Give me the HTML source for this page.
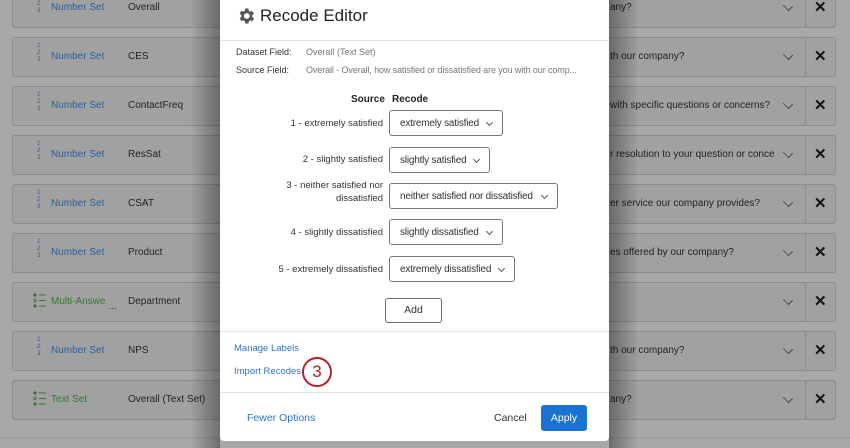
<!DOCTYPE html>
<html><head><style>
body{margin:0;width:850px;height:448px;overflow:hidden;background:#a8a8a8;font-family:"Liberation Sans",sans-serif;position:relative}
.card{position:absolute;left:12px;width:824px;height:40px;background:#a1a1a1;border:1px solid #8c8c8c;border-radius:3px;box-sizing:border-box;overflow:hidden}
.card .t{position:absolute;left:38px;top:13px;font-size:10px;color:#2b5f98}
.card .t.g{color:#2f7a2f}
.card .n{position:absolute;left:115px;top:13px;font-size:10px;color:#222}
.card .q{position:absolute;left:597px;top:13px;font-size:10px;color:#222;white-space:nowrap;width:165px;overflow:hidden}
.card .div{position:absolute;left:792px;top:0;bottom:0;border-left:1px solid #8a8a8a}
.card .ch{position:absolute;left:771px;top:13px;width:7px;height:7px;border-right:1px solid #444;border-bottom:1px solid #444;transform:rotate(45deg) scale(1,0.8)}
.card .x{position:absolute;left:801px;top:11px;font-size:15px;font-weight:bold;color:#111;line-height:15px}
.ic{position:absolute;left:24px;top:5px;font-size:6px;color:#2b5f98;line-height:7px;font-style:italic}
.mi{position:absolute;left:20px;top:10px}
.shade{position:absolute;left:190px;width:30px;top:0;height:448px;background:linear-gradient(to right,rgba(0,0,0,0),rgba(0,0,0,0.35))}
.shade2{position:absolute;left:609px;width:30px;top:0;height:448px;background:linear-gradient(to left,rgba(0,0,0,0),rgba(0,0,0,0.35))}
.m{position:absolute;left:220px;top:-10px;width:389px;height:451px;background:#fff;border-radius:4px}
.a{position:absolute;white-space:nowrap}
.lbl{font-size:9.5px;color:#333;text-align:right}
.dd{position:absolute;left:389px;height:26px;border:1px solid #777;border-radius:3px;box-sizing:border-box;font-size:10px;letter-spacing:-0.2px;color:#333;padding:7px 0 0 10px;white-space:nowrap;overflow:hidden}
.dd:after{content:"";position:absolute;right:10px;top:9px;width:4px;height:4px;border-right:1px solid #555;border-bottom:1px solid #555;transform:rotate(45deg)}
.lnk{color:#2d74c6;font-size:10px}
</style></head><body>
<div class="card" style="top:-12px"><span class="ic">1<br>2<br>3</span><span class="t">Number Set</span><span class="n">Overall</span><span class="q">any?</span><span class="div"></span><span class="ch"></span><span class="x">✕</span></div>
<div class="card" style="top:37px"><span class="ic">1<br>2<br>3</span><span class="t">Number Set</span><span class="n">CES</span><span class="q">th our company?</span><span class="div"></span><span class="ch"></span><span class="x">✕</span></div>
<div class="card" style="top:86px"><span class="ic">1<br>2<br>3</span><span class="t">Number Set</span><span class="n">ContactFreq</span><span class="q">with specific questions or concerns?</span><span class="div"></span><span class="ch"></span><span class="x">✕</span></div>
<div class="card" style="top:135px"><span class="ic">1<br>2<br>3</span><span class="t">Number Set</span><span class="n">ResSat</span><span class="q">r resolution to your question or conce...</span><span class="div"></span><span class="ch"></span><span class="x">✕</span></div>
<div class="card" style="top:184px"><span class="ic">1<br>2<br>3</span><span class="t">Number Set</span><span class="n">CSAT</span><span class="q">er service our company provides?</span><span class="div"></span><span class="ch"></span><span class="x">✕</span></div>
<div class="card" style="top:233px"><span class="ic">1<br>2<br>3</span><span class="t">Number Set</span><span class="n">Product</span><span class="q">es offered by our company?</span><span class="div"></span><span class="ch"></span><span class="x">✕</span></div>
<div class="card" style="top:282px"><svg class="mi" width="16" height="16" viewBox="0 0 16 16"><g fill="#2f7a2f"><circle cx="2" cy="2" r="1.6"/><circle cx="2" cy="13" r="1.6"/></g><circle cx="2" cy="7.5" r="1.3" fill="none" stroke="#2f7a2f" stroke-width=".8"/><g stroke="#2f7a2f" stroke-width="1"><path d="M6 2h7M6 7.5h7M6 13h7"/></g></svg><span class="t g">Multi-Answe</span><span class="a" style="left:96px;top:18px;font-size:9px;color:#222">...</span><span class="n">Department</span><span class="div"></span><span class="ch"></span><span class="x">✕</span></div>
<div class="card" style="top:331px"><span class="ic">1<br>2<br>3</span><span class="t">Number Set</span><span class="n">NPS</span><span class="q">th our company?</span><span class="div"></span><span class="ch"></span><span class="x">✕</span></div>
<div class="card" style="top:380px"><svg class="mi" width="16" height="16" viewBox="0 0 16 16"><g fill="#2f7a2f"><circle cx="2" cy="2" r="1.6"/><circle cx="2" cy="13" r="1.6"/></g><circle cx="2" cy="7.5" r="1.3" fill="none" stroke="#2f7a2f" stroke-width=".8"/><g stroke="#2f7a2f" stroke-width="1"><path d="M6 2h7M6 7.5h7M6 13h7"/></g></svg><span class="t g">Text Set</span><span class="n">Overall (Text Set)</span><span class="q">any?</span><span class="div"></span><span class="ch"></span><span class="x">✕</span></div>
<div style="position:absolute;left:0;right:0;top:437px;border-top:1px solid #999"></div>
<div class="shade"></div><div class="shade2"></div>
<div class="m"></div>
<svg class="a" style="left:236px;top:6px" width="20" height="20" viewBox="0 0 24 24"><path fill="#555" d="M19.4 13a7.5 7.5 0 0 0 0-2l2.1-1.6-2-3.5-2.5 1a7.6 7.6 0 0 0-1.7-1L15 3h-4l-.4 2.7a7.6 7.6 0 0 0-1.7 1l-2.5-1-2 3.5L6.6 11a7.5 7.5 0 0 0 0 2l-2.1 1.6 2 3.5 2.5-1a7.6 7.6 0 0 0 1.7 1L11 21h4l.4-2.7a7.6 7.6 0 0 0 1.7-1l2.5 1 2-3.5zM13 15.5a3.5 3.5 0 1 1 0-7 3.5 3.5 0 0 1 0 7z"/></svg>
<div class="a" style="left:260px;top:6px;font-size:17px;color:#222">Recode Editor</div>
<div class="a" style="left:220px;width:389px;top:40px;border-top:1px solid #e4e4e4"></div>
<div class="a" style="left:236px;top:47px;font-size:9px;color:#333">Dataset Field:</div>
<div class="a" style="left:306px;top:47px;font-size:9px;color:#777">Overall (Text Set)</div>
<div class="a" style="left:236px;top:65px;font-size:9px;color:#333">Source Field:</div>
<div class="a" style="left:306px;top:65px;font-size:9px;color:#777;letter-spacing:-0.1px">Overall - Overall, how satisfied or dissatisfied are you with our comp...</div>
<div class="a" style="left:351px;top:94px;font-size:10px;font-weight:bold;color:#222">Source</div>
<div class="a" style="left:392px;top:94px;font-size:10px;font-weight:bold;color:#222">Recode</div>
<div class="a lbl" style="right:467px;top:118px">1 - extremely satisfied</div>
<div class="dd" style="top:110px;width:114px">extremely satisfied</div>
<div class="a lbl" style="right:467px;top:154px">2 - slightly satisfied</div>
<div class="dd" style="top:147px;width:101px">slightly satisfied</div>
<div class="a lbl" style="right:467px;top:179px;line-height:13px">3 - neither satisfied nor<br>dissatisfied</div>
<div class="dd" style="top:183px;width:169px">neither satisfied nor dissatisfied</div>
<div class="a lbl" style="right:467px;top:227px">4 - slightly dissatisfied</div>
<div class="dd" style="top:219px;width:114px">slightly dissatisfied</div>
<div class="a lbl" style="right:467px;top:264px">5 - extremely dissatisfied</div>
<div class="dd" style="top:256px;width:126px">extremely dissatisfied</div>
<div class="a" style="left:385px;top:298px;width:57px;height:25px;border:1px solid #666;border-radius:3px;box-sizing:border-box;font-size:10.5px;color:#333;text-align:center;line-height:23px">Add</div>
<div class="a" style="left:220px;width:389px;top:331px;border-top:1px solid #e4e4e4"></div>
<div class="a lnk" style="left:234px;top:343px;font-size:9.5px">Manage Labels</div>
<div class="a lnk" style="left:234px;top:366px;font-size:9.5px">Import Recodes</div>
<div class="a" style="left:302px;top:357px;width:26px;height:26px;border:2.5px solid #b5202e;border-radius:50%;color:#b5202e;font-size:17px;text-align:center;line-height:26px;background:#fff">3</div>
<div class="a" style="left:220px;width:389px;top:392px;border-top:1px solid #e4e4e4"></div>
<div class="a lnk" style="left:247px;top:412px;font-size:10.5px">Fewer Options</div>
<div class="a" style="left:494px;top:412px;font-size:10.5px;color:#333">Cancel</div>
<div class="a" style="left:541px;top:405px;width:46px;height:26px;background:#1a73d3;border-radius:3px;color:#fff;font-size:10.5px;text-align:center;line-height:26px">Apply</div>
</body></html>
